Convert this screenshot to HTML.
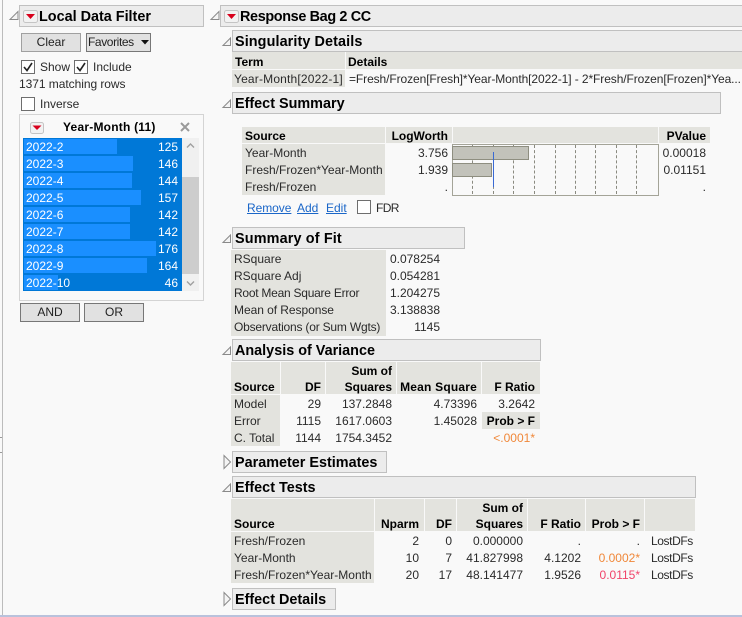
<!DOCTYPE html>
<html><head><meta charset="utf-8">
<style>
html,body{margin:0;padding:0;width:742px;height:617px;overflow:hidden;background:#f9f9f9}
body{position:relative;font-family:"Liberation Sans",sans-serif;font-size:12px;color:#2a2a2a}
div,a,svg{position:absolute}
.t{line-height:16px;height:16px;white-space:nowrap}
.r{text-align:right}
.b{font-weight:bold;color:#000}
.h{background:#ececec;border:1px solid #c0c0c0;box-sizing:border-box;height:22px}
.ht{font-weight:bold;font-size:14.4px;line-height:20px;height:20px;color:#000;white-space:nowrap;margin-top:1px}
.c{background:#e3e3de}
.btn{background:#e1e1e1;border:1px solid #777;box-sizing:border-box;text-align:center;line-height:17px;color:#222}
.cb{width:14px;height:14px;box-sizing:border-box;background:#fff;border:1px solid #6e6e6e}
.bar{left:24px;height:15px;background:#1a8fff}
.w{color:#fff}
.dash{top:145px;height:49px;border-left:1px dashed #8a8a80;width:0}
a{color:#1a66c8;text-decoration:underline;line-height:16px;height:16px}
</style></head><body>

<!-- far left line -->
<div style="left:2px;top:0;width:1px;height:617px;background:#bcbcbc"></div>
<div style="left:0;top:437px;width:2px;height:1px;background:#999"></div>
<div style="left:0;top:452px;width:2px;height:1px;background:#999"></div>
<div style="left:0;top:615px;width:742px;height:2px;background:#b9c2dc"></div>

<!-- disclosure triangles -->
<svg style="left:0;top:0" width="742" height="617">
<g fill="#f4f4f4" stroke="#8a8a8a" stroke-width="1">
<path d="M10 19.5H18V11.5Z"/>
<path d="M211 19.5H219V11.5Z"/>
<path d="M223 45.5H230.5V38Z"/>
<path d="M223 107.5H230.5V100Z"/>
<path d="M223 242.5H230.5V235Z"/>
<path d="M223 354.5H230.5V347Z"/>
<path d="M223 491.5H230.5V484Z"/>
<path d="M224 455.5V468.5L230.5 462Z"/>
<path d="M224 592.5V605.5L230.5 599Z"/>
</g>
</svg>

<!-- Local Data Filter -->
<div class="h" style="left:19px;top:5px;width:185px"></div>
<svg style="left:23px;top:10px" width="15" height="13"><rect x=".5" y=".5" width="14" height="12" rx="2" fill="#f2f2f2" stroke="#c4c4c4"/><path d="M3 4H12L7.5 9Z" fill="#d8001c"/></svg>
<div class="ht" style="left:39px;top:6px">Local Data Filter</div>

<div class="btn" style="left:21px;top:33px;width:60px;height:19px;border-color:#a0a0a0">Clear</div>
<div class="btn" style="left:86px;top:33px;width:65px;height:19px;text-align:left;padding-left:1px;letter-spacing:-.4px">Favorites</div>
<svg style="left:141px;top:40px" width="8" height="5"><path d="M0 0H8L4 4.5Z" fill="#111"/></svg>

<div class="cb" style="left:21px;top:60px"></div>
<svg style="left:21px;top:60px" width="14" height="14"><path d="M3 7L6 10.5L11 3" fill="none" stroke="#222" stroke-width="1.6"/></svg>
<div class="t" style="left:40px;top:59px">Show</div>
<div class="cb" style="left:74px;top:60px"></div>
<svg style="left:74px;top:60px" width="14" height="14"><path d="M3 7L6 10.5L11 3" fill="none" stroke="#222" stroke-width="1.6"/></svg>
<div class="t" style="left:93px;top:59px">Include</div>
<div class="t" style="left:19px;top:76px;letter-spacing:-.05px">1371 matching rows</div>
<div class="cb" style="left:21px;top:97px"></div>
<div class="t" style="left:40px;top:96px">Inverse</div>

<div style="left:19px;top:114px;width:185px;height:187px;box-sizing:border-box;border:1px solid #d4d4d4"></div>
<svg style="left:30px;top:122px" width="14" height="12"><rect x=".5" y=".5" width="13" height="11" rx="2" fill="#f2f2f2" stroke="#c4c4c4"/><path d="M2.5 3.5H11.5L7 8Z" fill="#d8001c"/></svg>
<div class="t b" style="left:63px;top:119px;letter-spacing:.22px">Year-Month (11)</div>
<svg style="left:180px;top:122px" width="10" height="10"><path d="M1 1L9 9M9 1L1 9" stroke="#9a9a9a" stroke-width="2"/></svg>

<div style="left:23px;top:138px;width:159px;height:153px;background:#0078d7"></div>
<div class="bar" style="top:139px;width:93px"></div>
<div class="bar" style="top:156px;width:109px"></div>
<div class="bar" style="top:173px;width:108px"></div>
<div class="bar" style="top:190px;width:117px"></div>
<div class="bar" style="top:207px;width:106px"></div>
<div class="bar" style="top:224px;width:106px"></div>
<div class="bar" style="top:241px;width:132px"></div>
<div class="bar" style="top:258px;width:123px"></div>
<div class="bar" style="top:275px;width:34px"></div>
<div class="t w" style="left:26px;top:139px">2022-2</div><div class="t w r" style="left:130px;width:48px;top:139px">125</div>
<div class="t w" style="left:26px;top:156px">2022-3</div><div class="t w r" style="left:130px;width:48px;top:156px">146</div>
<div class="t w" style="left:26px;top:173px">2022-4</div><div class="t w r" style="left:130px;width:48px;top:173px">144</div>
<div class="t w" style="left:26px;top:190px">2022-5</div><div class="t w r" style="left:130px;width:48px;top:190px">157</div>
<div class="t w" style="left:26px;top:207px">2022-6</div><div class="t w r" style="left:130px;width:48px;top:207px">142</div>
<div class="t w" style="left:26px;top:224px">2022-7</div><div class="t w r" style="left:130px;width:48px;top:224px">142</div>
<div class="t w" style="left:26px;top:241px">2022-8</div><div class="t w r" style="left:130px;width:48px;top:241px">176</div>
<div class="t w" style="left:26px;top:258px">2022-9</div><div class="t w r" style="left:130px;width:48px;top:258px">164</div>
<div class="t w" style="left:26px;top:275px">2022-10</div><div class="t w r" style="left:130px;width:48px;top:275px">46</div>

<div style="left:182px;top:138px;width:17px;height:153px;background:#f0f0f0"></div>
<div style="left:182px;top:177px;width:17px;height:97px;background:#cdcdcd"></div>
<svg style="left:182px;top:138px" width="17" height="153"><path d="M5 9.5L8.5 6L12 9.5M5 143.5L8.5 147L12 143.5" fill="none" stroke="#a0a0a0" stroke-width="1.4"/></svg>

<div class="btn" style="left:20px;top:303px;width:60px;height:19px">AND</div>
<div class="btn" style="left:84px;top:303px;width:60px;height:19px">OR</div>

<!-- Response header -->
<div class="h" style="left:220px;top:5px;width:530px"></div>
<svg style="left:224px;top:10px" width="15" height="13"><rect x=".5" y=".5" width="14" height="12" rx="2" fill="#f2f2f2" stroke="#c4c4c4"/><path d="M3 4H12L7.5 9Z" fill="#d8001c"/></svg>
<div class="ht" style="left:240px;top:6px;letter-spacing:-.35px">Response Bag 2 CC</div>

<!-- Singularity Details -->
<div class="h" style="left:232px;top:30px;width:520px"></div>
<div class="ht" style="left:235px;top:31px;letter-spacing:.1px">Singularity Details</div>
<div class="c" style="left:232px;top:52px;width:113px;height:17px"></div>
<div class="c" style="left:346px;top:52px;width:396px;height:17px"></div>
<div class="t b" style="left:235px;top:54px">Term</div>
<div class="t b" style="left:348px;top:54px">Details</div>
<div class="c" style="left:232px;top:70px;width:113px;height:17px"></div>
<div class="t" style="left:234px;top:71px;letter-spacing:.18px">Year-Month[2022-1]</div>
<div class="t" style="left:349px;top:71px;width:393px;overflow:hidden;letter-spacing:-.09px">=Fresh/Frozen[Fresh]*Year-Month[2022-1] - 2*Fresh/Frozen[Frozen]*Yea...</div>

<!-- Effect Summary -->
<div class="h" style="left:232px;top:92px;width:489px"></div>
<div class="ht" style="left:235px;top:93px">Effect Summary</div>

<div class="c" style="left:242px;top:127px;width:143px;height:16px"></div>
<div class="c" style="left:386px;top:127px;width:66px;height:16px"></div>
<div class="c" style="left:453px;top:127px;width:205px;height:16px"></div>
<div class="c" style="left:659px;top:127px;width:51px;height:16px"></div>
<div class="c" style="left:242px;top:144px;width:143px;height:51px"></div>
<div class="t b" style="left:245px;top:128px">Source</div>
<div class="t b r" style="left:386px;width:62px;top:128px">LogWorth</div>
<div class="t b r" style="left:659px;width:47px;top:128px">PValue</div>
<div class="t" style="left:245px;top:145px">Year-Month</div>
<div class="t" style="left:245px;top:162px">Fresh/Frozen*Year-Month</div>
<div class="t" style="left:245px;top:179px">Fresh/Frozen</div>
<div class="t r" style="left:386px;width:62px;top:145px">3.756</div>
<div class="t r" style="left:386px;width:62px;top:162px">1.939</div>
<div class="t r" style="left:386px;width:62px;top:179px">.</div>
<div class="t r" style="left:659px;width:47px;top:145px">0.00018</div>
<div class="t r" style="left:659px;width:47px;top:162px">0.01151</div>
<div class="t r" style="left:659px;width:47px;top:179px">.</div>

<div style="left:452px;top:144px;width:207px;height:52px;box-sizing:border-box;border:1px solid #a4a498"></div>
<div class="dash" style="left:472px"></div>
<div class="dash" style="left:513px"></div>
<div class="dash" style="left:534px"></div>
<div class="dash" style="left:555px"></div>
<div class="dash" style="left:575px"></div>
<div class="dash" style="left:595px"></div>
<div class="dash" style="left:616px"></div>
<div class="dash" style="left:636px"></div>
<div class="dash" style="left:493px"></div>
<div style="left:452px;top:146px;width:77px;height:14px;box-sizing:border-box;background:#c2c2ba;border:1px solid #8e8e80"></div>
<div style="left:452px;top:163px;width:40px;height:14px;box-sizing:border-box;background:#c2c2ba;border:1px solid #8e8e80"></div>
<div style="left:493px;top:152px;width:1px;height:35px;background:#3a6ad4"></div>

<a style="left:247px;top:200px;letter-spacing:-.05px">Remove</a>
<a style="left:297px;top:200px">Add</a>
<a style="left:326px;top:200px">Edit</a>
<div class="cb" style="left:357px;top:200px"></div>
<div class="t" style="left:376px;top:200px;letter-spacing:-.6px">FDR</div>

<!-- Summary of Fit -->
<div class="h" style="left:232px;top:227px;width:233px"></div>
<div class="ht" style="left:235px;top:228px;letter-spacing:.15px">Summary of Fit</div>
<div class="c" style="left:231px;top:250px;width:155px;height:86px"></div>
<div class="t" style="left:234px;top:251px">RSquare</div>
<div class="t" style="left:234px;top:268px">RSquare Adj</div>
<div class="t" style="left:234px;top:285px;letter-spacing:-.25px">Root Mean Square Error</div>
<div class="t" style="left:234px;top:302px;letter-spacing:-.05px">Mean of Response</div>
<div class="t" style="left:234px;top:319px;letter-spacing:-.2px">Observations (or Sum Wgts)</div>
<div class="t r" style="left:386px;width:54px;top:251px">0.078254</div>
<div class="t r" style="left:386px;width:54px;top:268px">0.054281</div>
<div class="t r" style="left:386px;width:54px;top:285px">1.204275</div>
<div class="t r" style="left:386px;width:54px;top:302px">3.138838</div>
<div class="t r" style="left:386px;width:54px;top:319px">1145</div>

<!-- ANOVA -->
<div class="h" style="left:232px;top:339px;width:309px"></div>
<div class="ht" style="left:235px;top:340px">Analysis of Variance</div>
<div class="c" style="left:231px;top:362px;width:49px;height:32px"></div>
<div class="c" style="left:281px;top:362px;width:44px;height:32px"></div>
<div class="c" style="left:326px;top:362px;width:70px;height:32px"></div>
<div class="c" style="left:397px;top:362px;width:84px;height:32px"></div>
<div class="c" style="left:482px;top:362px;width:58px;height:32px"></div>
<div class="c" style="left:231px;top:395px;width:49px;height:51px"></div>
<div class="c" style="left:482px;top:412px;width:58px;height:17px"></div>
<div class="t b" style="left:234px;top:379px">Source</div>
<div class="t b r" style="left:281px;width:40px;top:379px">DF</div>
<div class="t b r" style="left:326px;width:66px;top:363px">Sum of</div>
<div class="t b r" style="left:326px;width:66px;top:379px">Squares</div>
<div class="t b r" style="left:397px;width:80px;top:379px;letter-spacing:.2px">Mean Square</div>
<div class="t b r" style="left:482px;width:53px;top:379px">F Ratio</div>
<div class="t" style="left:234px;top:396px">Model</div>
<div class="t" style="left:234px;top:413px">Error</div>
<div class="t" style="left:234px;top:430px">C. Total</div>
<div class="t r" style="left:281px;width:40px;top:396px">29</div>
<div class="t r" style="left:281px;width:40px;top:413px">1115</div>
<div class="t r" style="left:281px;width:40px;top:430px">1144</div>
<div class="t r" style="left:326px;width:66px;top:396px">137.2848</div>
<div class="t r" style="left:326px;width:66px;top:413px">1617.0603</div>
<div class="t r" style="left:326px;width:66px;top:430px">1754.3452</div>
<div class="t r" style="left:397px;width:80px;top:396px">4.73396</div>
<div class="t r" style="left:397px;width:80px;top:413px">1.45028</div>
<div class="t r" style="left:482px;width:53px;top:396px">3.2642</div>
<div class="t b r" style="left:482px;width:53px;top:413px">Prob &gt; F</div>
<div class="t r" style="left:482px;width:53px;top:430px;color:#f0883a">&lt;.0001*</div>

<!-- Parameter Estimates -->
<div class="h" style="left:232px;top:451px;width:155px"></div>
<div class="ht" style="left:235px;top:452px">Parameter Estimates</div>

<!-- Effect Tests -->
<div class="h" style="left:232px;top:476px;width:464px"></div>
<div class="ht" style="left:235px;top:477px">Effect Tests</div>
<div class="c" style="left:231px;top:499px;width:143px;height:32px"></div>
<div class="c" style="left:375px;top:499px;width:49px;height:32px"></div>
<div class="c" style="left:425px;top:499px;width:31px;height:32px"></div>
<div class="c" style="left:457px;top:499px;width:70px;height:32px"></div>
<div class="c" style="left:528px;top:499px;width:57px;height:32px"></div>
<div class="c" style="left:586px;top:499px;width:58px;height:32px"></div>
<div class="c" style="left:645px;top:499px;width:50px;height:32px"></div>
<div class="c" style="left:231px;top:532px;width:143px;height:51px"></div>
<div class="t b" style="left:234px;top:516px">Source</div>
<div class="t b r" style="left:375px;width:44px;top:516px">Nparm</div>
<div class="t b r" style="left:425px;width:27px;top:516px">DF</div>
<div class="t b r" style="left:457px;width:66px;top:500px">Sum of</div>
<div class="t b r" style="left:457px;width:66px;top:516px">Squares</div>
<div class="t b r" style="left:528px;width:53px;top:516px">F Ratio</div>
<div class="t b r" style="left:586px;width:54px;top:516px">Prob &gt; F</div>
<div class="t" style="left:234px;top:533px">Fresh/Frozen</div>
<div class="t" style="left:234px;top:550px">Year-Month</div>
<div class="t" style="left:234px;top:567px">Fresh/Frozen*Year-Month</div>
<div class="t r" style="left:375px;width:44px;top:533px">2</div>
<div class="t r" style="left:375px;width:44px;top:550px">10</div>
<div class="t r" style="left:375px;width:44px;top:567px">20</div>
<div class="t r" style="left:425px;width:27px;top:533px">0</div>
<div class="t r" style="left:425px;width:27px;top:550px">7</div>
<div class="t r" style="left:425px;width:27px;top:567px">17</div>
<div class="t r" style="left:457px;width:66px;top:533px">0.000000</div>
<div class="t r" style="left:457px;width:66px;top:550px">41.827998</div>
<div class="t r" style="left:457px;width:66px;top:567px">48.141477</div>
<div class="t r" style="left:528px;width:53px;top:533px">.</div>
<div class="t r" style="left:528px;width:53px;top:550px">4.1202</div>
<div class="t r" style="left:528px;width:53px;top:567px">1.9526</div>
<div class="t r" style="left:586px;width:54px;top:533px">.</div>
<div class="t r" style="left:586px;width:54px;top:550px;color:#f0883a">0.0002*</div>
<div class="t r" style="left:586px;width:54px;top:567px;color:#f0446a">0.0115*</div>
<div class="t" style="left:651px;top:533px;letter-spacing:-.4px">LostDFs</div>
<div class="t" style="left:651px;top:550px;letter-spacing:-.4px">LostDFs</div>
<div class="t" style="left:651px;top:567px;letter-spacing:-.4px">LostDFs</div>

<!-- Effect Details -->
<div class="h" style="left:232px;top:588px;width:104px"></div>
<div class="ht" style="left:235px;top:589px">Effect Details</div>

</body></html>
